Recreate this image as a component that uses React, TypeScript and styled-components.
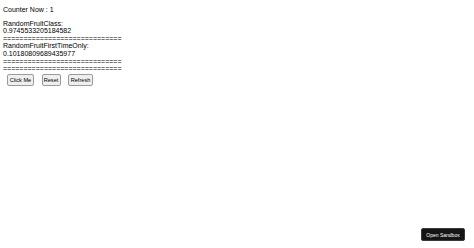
import React, { useState } from "react";
import styled, { createGlobalStyle } from "styled-components";

const Global = createGlobalStyle`
  html, body { margin: 0; padding: 0; background: #ffffff; }
  body { font-family: "Liberation Sans", Arial, Helvetica, sans-serif; color: #000; }
`;

const Page = styled.div`
  padding: 6px 3px;
  font-size: 7px;
  line-height: 7.6px;
`;

const Counter = styled.div`
  margin-bottom: 6px;
`;

const Line = styled.div`
  white-space: nowrap;
`;

const ButtonRow = styled.div`
  display: flex;
  gap: 7.5px;
  padding-left: 4px;
  margin-top: 1px;
`;

const Btn = styled.button<{ $w: number }>`
  font-family: "Liberation Sans", Arial, sans-serif;
  font-size: 5.6px;
  width: ${(p) => p.$w}px;
  height: 12.5px;
  padding: 0;
  margin: 0;
  background: #efefef;
  border: 1px solid #9a9a9a;
  border-radius: 2px;
  color: #000;
  white-space: nowrap;
`;

const SandboxBtn = styled.button`
  position: fixed;
  right: 9px;
  bottom: 7px;
  width: 44px;
  height: 13px;
  padding: 0;
  background: #151515;
  color: #ffffff;
  border: 1px solid #3a3a3a;
  border-radius: 2px;
  font-family: "Liberation Sans", Arial, sans-serif;
  font-size: 5px;
  white-space: nowrap;
`;

const EQ = "=".repeat(29);

export default function App() {
  const [count, setCount] = useState(1);
  return (
    <>
      <Global />
      <Page>
        <Counter>Counter Now : {count}</Counter>
        <Line>RandomFruitClass:</Line>
        <Line>0.9745533205184582</Line>
        <Line>{EQ}</Line>
        <Line>RandomFruitFirstTimeOnly:</Line>
        <Line>0.10180809689435977</Line>
        <Line>{EQ}</Line>
        <Line>{EQ}</Line>
        <ButtonRow>
          <Btn $w={27} onClick={() => setCount(count + 1)}>Click Me</Btn>
          <Btn $w={19} onClick={() => setCount(0)}>Reset</Btn>
          <Btn $w={25}>Refresh</Btn>
        </ButtonRow>
      </Page>
      <SandboxBtn>Open Sandbox</SandboxBtn>
    </>
  );
}
